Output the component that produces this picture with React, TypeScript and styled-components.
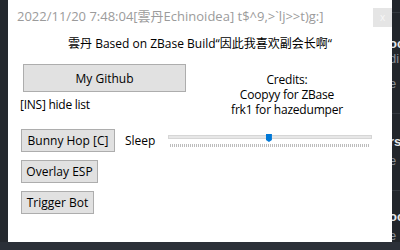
import React from 'react'
import styled, { createGlobalStyle } from 'styled-components'

const GlobalStyle = createGlobalStyle`
  html, body {
    margin: 0;
    padding: 0;
    background: #24282e;
  }
  body {
    font-family: 'Open Sans', 'Noto Sans', 'Noto Sans CJK SC', sans-serif;
  }
`

const Desktop = styled.div`
  width: 400px;
  height: 250px;
  display: grid;
  grid-template-columns: 8px 384px 8px;
  grid-template-rows: 242px 8px;
  background: #24282e;
  overflow: hidden;
`

const Gutter = styled.div`
  background: #24282e;
`

const BottomStrip = styled.div`
  grid-column: 1 / 4;
  background: #2b3038;
`

const SideWindow = styled.div`
  background: #22262b;
  overflow: hidden;
  display: flex;
  flex-direction: column;
  font-family: 'Liberation Sans', sans-serif;
  font-size: 13px;
  line-height: 15px;
  color: #8a8f96;
  white-space: nowrap;
`

const SideRule = styled.div<{ top: number }>`
  height: 1px;
  flex: none;
  background: #34393f;
  margin-top: ${(p) => p.top}px;
`

const SideText = styled.div<{ top: number; bold?: boolean }>`
  margin-top: ${(p) => p.top}px;
  margin-left: -3px;
  color: ${(p) => (p.bold ? '#e6e8ea' : '#8a8f96')};
  font-weight: ${(p) => (p.bold ? 700 : 400)};
`

const Window = styled.div`
  background: #ffffff;
  display: flex;
  flex-direction: column;
  color: #000;
  font-size: 12px;
`

const TitleBar = styled.div`
  display: flex;
  align-items: flex-start;
  justify-content: space-between;
  padding: 8px 0 0 9px;
  height: 36px;
  box-sizing: border-box;
`

const TitleText = styled.div`
  font-size: 13px;
  line-height: 16px;
  color: #9b9b9b;
  white-space: nowrap;
`

const CloseButton = styled.div`
  width: 19px;
  height: 19px;
  background: #e5e5e5;
  color: #f7f7f7;
  font-size: 10px;
  line-height: 19px;
  text-align: center;
`

const Headline = styled.div`
  text-align: center;
  line-height: 16px;
  white-space: nowrap;
`

const TopGrid = styled.div`
  display: grid;
  grid-template-columns: 190px 1fr;
  margin-top: 12px;
`

const LeftCol = styled.div`
  display: flex;
  flex-direction: column;
  align-items: flex-start;
  padding-left: 15px;
`

const Credits = styled.div`
  text-align: center;
  line-height: 15px;
  padding-top: 8px;
  padding-right: 16px;
  letter-spacing: -0.2px;
`

const WinButton = styled.div<{ width: number; height?: number }>`
  width: ${(p) => p.width}px;
  height: ${(p) => p.height ?? 23}px;
  box-sizing: border-box;
  background: #e1e1e1;
  border: 1px solid #adadad;
  display: flex;
  align-items: center;
  justify-content: center;
  white-space: nowrap;
`

const Hint = styled.div`
  margin-top: 5px;
  margin-left: -3px;
  line-height: 16px;
  letter-spacing: -0.25px;
`

const BottomArea = styled.div`
  display: flex;
  margin-top: 12px;
  padding-left: 13px;
`

const ButtonStack = styled.div`
  display: flex;
  flex-direction: column;
  gap: 8px;
`

const SleepRow = styled.div`
  display: flex;
  align-items: flex-start;
  margin-left: 10px;
`

const SleepLabel = styled.div`
  line-height: 16px;
  margin-top: 4px;
  width: 43px;
`

const Slider = styled.div`
  width: 204px;
  position: relative;
  height: 18px;
`

const Track = styled.div`
  margin-top: 6px;
  height: 4px;
  background: #e7e7e7;
  border: 1px solid #d6d6d6;
  box-sizing: border-box;
`

const Ticks = styled.div`
  margin: 5px 2px 0 2px;
  height: 3px;
  background: repeating-linear-gradient(90deg, #bcbcbc 0 1px, transparent 1px 2px);
`

const Thumb = styled.div`
  position: absolute;
  top: 5px;
  width: 6px;
  height: 8px;
  background: #0078d7;
  clip-path: polygon(0 0, 100% 0, 100% 75%, 50% 100%, 0 75%);
`

export default function App() {
  const value = 0.48
  return (
    <>
      <GlobalStyle />
      <Desktop>
        <Gutter />
        <Window>
          <TitleBar>
            <TitleText>2022/11/20 7:48:04[雲丹Echinoidea] t$^9,&gt;`lj&gt;&gt;t)g:]</TitleText>
            <CloseButton>x</CloseButton>
          </TitleBar>
          <Headline>雲丹 Based on ZBase Build“因此我喜欢副会长啊“</Headline>
          <TopGrid>
            <LeftCol>
              <WinButton width={163} height={28}>My Github</WinButton>
              <Hint>[INS] hide list</Hint>
            </LeftCol>
            <Credits>
              Credits:
              <br />
              Coopyy for ZBase
              <br />
              frk1 for hazedumper
            </Credits>
          </TopGrid>
          <BottomArea>
            <ButtonStack>
              <WinButton width={94}>Bunny Hop [C]</WinButton>
              <WinButton width={77}>Overlay ESP</WinButton>
              <WinButton width={73}>Trigger Bot</WinButton>
            </ButtonStack>
            <SleepRow>
              <SleepLabel>Sleep</SleepLabel>
              <Slider>
                <Track />
                <Ticks />
                <Thumb style={{ left: `${value * 204}px` }} />
              </Slider>
            </SleepRow>
          </BottomArea>
        </Window>
        <SideWindow>
          <SideRule top={12} />
          <SideText top={23} bold>oc</SideText>
          <SideText top={0}>di</SideText>
          <SideText top={10}>e</SideText>
          <SideRule top={22} />
          <SideText top={20} bold>rs</SideText>
          <SideText top={4}>e</SideText>
          <SideRule top={22} />
          <SideText top={18} bold>oc</SideText>
          <SideText top={4}>e</SideText>
        </SideWindow>
        <BottomStrip />
      </Desktop>
    </>
  )
}
